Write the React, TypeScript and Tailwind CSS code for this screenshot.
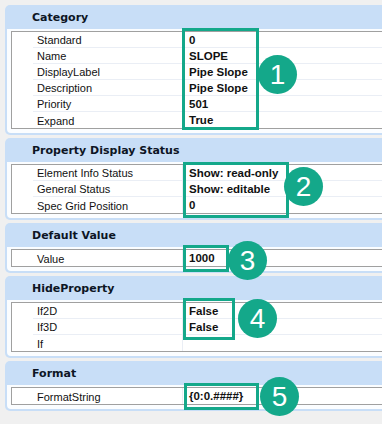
type Row = { label: string; value: string };

type Section = { title: string; rows: Row[] };

const sections: Section[] = [
  {
    title: "Category",
    rows: [
      { label: "Standard", value: "0" },
      { label: "Name", value: "SLOPE" },
      { label: "DisplayLabel", value: "Pipe Slope" },
      { label: "Description", value: "Pipe Slope" },
      { label: "Priority", value: "501" },
      { label: "Expand", value: "True" },
    ],
  },
  {
    title: "Property Display Status",
    rows: [
      { label: "Element Info Status", value: "Show: read-only" },
      { label: "General Status", value: "Show: editable" },
      { label: "Spec Grid Position", value: "0" },
    ],
  },
  {
    title: "Default Value",
    rows: [{ label: "Value", value: "1000" }],
  },
  {
    title: "HideProperty",
    rows: [
      { label: "If2D", value: "False" },
      { label: "If3D", value: "False" },
      { label: "If", value: "" },
    ],
  },
  {
    title: "Format",
    rows: [{ label: "FormatString", value: "{0:0.####}" }],
  },
];

// callouts drawn on top of the grid
const boxes = [
  { n: 1, box: "left-[182px] top-[28px] w-[77px] h-[102px]", dot: "left-[258px] top-[55px]" },
  { n: 2, box: "left-[183px] top-[162px] w-[106px] h-[56px]", dot: "left-[284px] top-[167px]" },
  { n: 3, box: "left-[183px] top-[245px] w-[46px] h-[27px]", dot: "left-[228px] top-[241px]" },
  { n: 4, box: "left-[183px] top-[298px] w-[52px] h-[42px]", dot: "left-[238px] top-[299px]" },
  { n: 5, box: "left-[184px] top-[383px] w-[75px] h-[27px]", dot: "left-[260px] top-[377px]" },
];

const PropertyPanel = ({ section }: { section: Section }) => (
  <div className="ml-[5px] w-[390px] rounded-l-[5px] bg-[#c8def7] pb-[2px]">
    <div className="flex h-[24px] items-center pl-[27px] pt-[2px] font-['DejaVu_Sans',sans-serif] text-[11px] font-bold text-[#0d1524]">
      {section.title}
    </div>
    <div className="ml-[2px] rounded-bl-[4px] bg-[#fbfdff] pb-[4px] pl-[4px] pt-[2px]">
      <div className="border border-r-0 border-[#a0a0a0] bg-white">
        {section.rows.map((row, i) => (
          <div key={i} className="flex h-[16px]">
            <div className="w-[21px] shrink-0" />
            <div
              className={`flex w-[150px] shrink-0 items-center border-r border-[#eaeef5] pl-[4px] pt-[2px] ${
                i < section.rows.length - 1 ? "border-b" : ""
              }`}
            >
              {row.label}
            </div>
            <div
              className={`flex flex-1 items-center border-[#eaeef5] pl-[6px] pt-[2px] text-[11.5px] font-bold ${
                i < section.rows.length - 1 ? "border-b" : ""
              }`}
            >
              {row.value}
            </div>
          </div>
        ))}
      </div>
    </div>
  </div>
);

export default function App() {
  return (
    <div className="relative h-[424px] w-[382px] overflow-hidden bg-[#f0f0f0] pt-[5px] font-['Liberation_Sans',Arial,sans-serif] text-[11px] text-[#111]">
      <div className="flex flex-col gap-[3px]">
        {sections.map((s) => (
          <PropertyPanel key={s.title} section={s} />
        ))}
      </div>

      {boxes.map((b) => (
        <div key={b.n}>
          <div className={`absolute border-[3px] border-[#14a88a] ${b.box}`} />
          <div
            className={`absolute flex h-[39px] w-[39px] items-center justify-center rounded-full bg-[#14a88a] font-['Liberation_Sans',Arial,sans-serif] text-[28px] leading-none text-white ${b.dot}`}
          >
            {b.n}
          </div>
        </div>
      ))}
    </div>
  );
}
